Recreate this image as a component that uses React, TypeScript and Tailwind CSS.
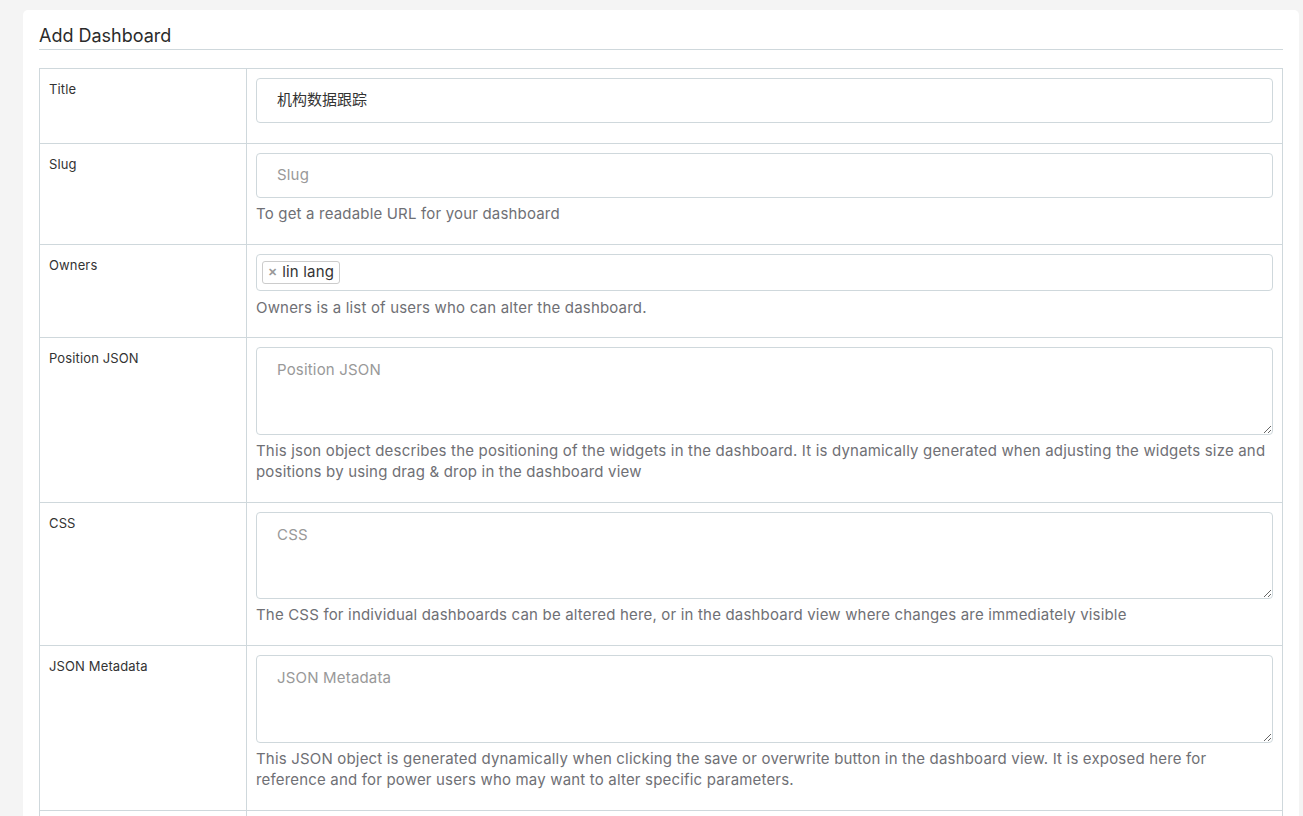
import React from "react";

const font = { fontFamily: 'Inter, "Noto Sans CJK SC", sans-serif' };

function Row({ label, children }: { label: string; children: React.ReactNode }) {
  return (
    <div className="flex border-b border-[#cfd8dc]">
      <div className="w-[207px] shrink-0 border-r border-[#cfd8dc] pl-[9px] pt-[11px] text-[13px] leading-[18px] tracking-[0.01em] text-[#333]">
        {label}
      </div>
      <div className="flex-1 pl-[9px] pr-[9px] pt-[9px] pb-[20px]">{children}</div>
    </div>
  );
}

function Help({ children, className = "mt-[5px]" }: { children: React.ReactNode; className?: string }) {
  return (
    <div className={`${className} text-[15px] leading-[21px] tracking-[0.012em] text-[#6f7075]`}>{children}</div>
  );
}

function TextArea({ placeholder, short }: { placeholder: string; short?: boolean }) {
  return (
    <textarea
      placeholder={placeholder}
      className={`block ${short ? "h-[87px]" : "h-[88px]"} w-full rounded-[4px] border border-[#cfd8dc] px-[20px] py-[11px] text-[15px] leading-[21px] tracking-[0.012em] text-[#333] placeholder:text-[#999] outline-none`}
      style={font}
    />
  );
}

export default function App() {
  return (
    <div className="min-h-[816px] bg-[#f4f4f4] pl-[23px] pr-[4px] pt-[10px]" style={font}>
      <div className="min-h-[820px] rounded-t-[5px] bg-white px-[16px] pt-[13px]">
        <h2 className="border-b border-[#cfd8dc] text-[18px] leading-[26px] text-[#2b2b2b]">
          Add Dashboard
        </h2>
        <div className="mt-[18px] border-l border-r border-t border-[#cfd8dc]">
          <Row label="Title">
            <div className="flex h-[45px] items-center rounded-[4px] border border-[#cfd8dc] px-[20px] text-[15px] text-[#333]">
              机构数据跟踪
            </div>
          </Row>
          <Row label="Slug">
            <div className="flex h-[45px] items-center rounded-[4px] border border-[#cfd8dc] px-[20px] text-[15px] tracking-[0.012em] text-[#999]">
              Slug
            </div>
            <Help>To get a readable URL for your dashboard</Help>
          </Row>
          <Row label="Owners">
            <div className="flex h-[37px] items-center rounded-[4px] border border-[#cfd8dc] px-[5px]">
              <span className="flex h-[23px] items-center gap-[5px] rounded-[3px] border border-[#ccc] px-[5px] text-[15px] tracking-[0.012em] text-[#333]">
                <span className="text-[11px] font-bold text-[#999]">✕</span>
                lin lang
              </span>
            </div>
            <Help className="mt-[6px] -mb-[1px]">Owners is a list of users who can alter the dashboard.</Help>
          </Row>
          <Row label="Position JSON">
            <TextArea placeholder="Position JSON" />
            <Help>
              This json object describes the positioning of the widgets in the dashboard. It is dynamically generated when adjusting the widgets size and positions by using drag &amp; drop in the dashboard view
            </Help>
          </Row>
          <Row label="CSS">
            <TextArea placeholder="CSS" short />
            <Help>
              The CSS for individual dashboards can be altered here, or in the dashboard view where changes are immediately visible
            </Help>
          </Row>
          <Row label="JSON Metadata">
            <TextArea placeholder="JSON Metadata" />
            <Help>
              This JSON object is generated dynamically when clicking the save or overwrite button in the dashboard view. It is exposed here for reference and for power users who may want to alter specific parameters.
            </Help>
          </Row>
          <Row label="">
            <div className="h-[60px]" />
          </Row>
        </div>
      </div>
    </div>
  );
}
